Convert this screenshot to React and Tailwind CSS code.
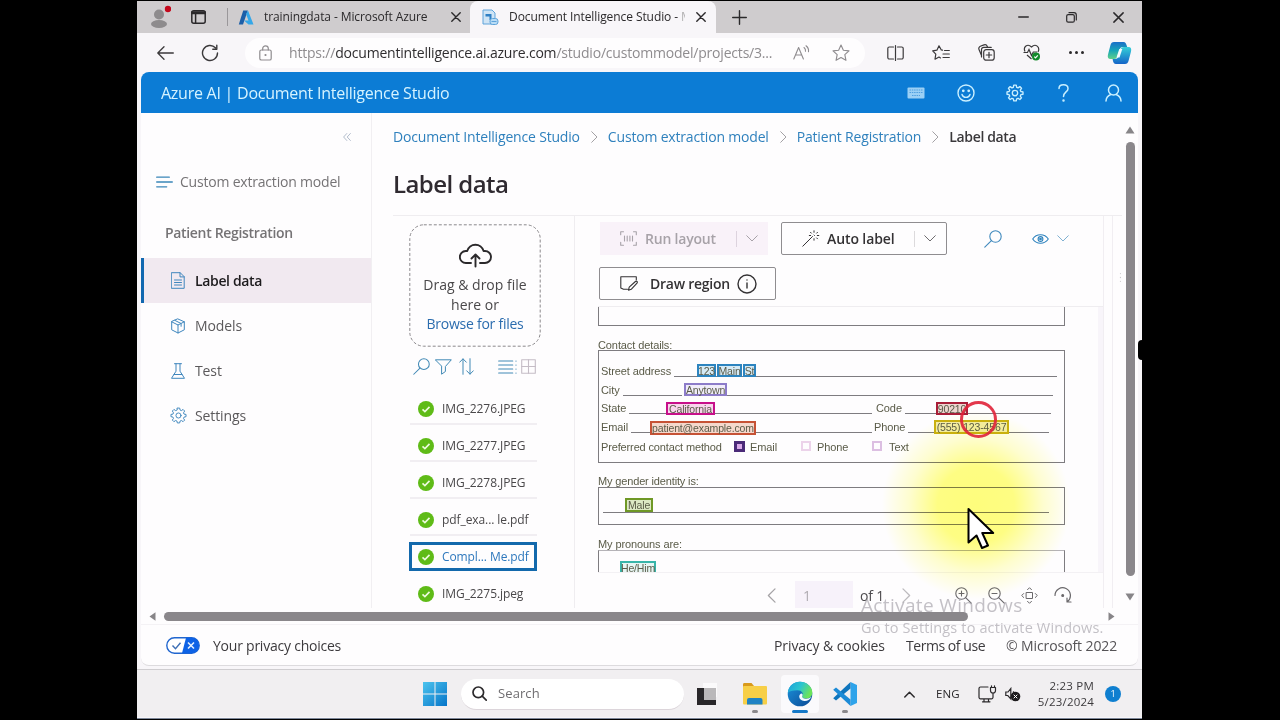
import { clsx } from "clsx";

const Icon = ({ size = 16, w, h, box = "0 0 16 16", stroke = 1, className, children }) => (
    <svg
        width={w || size}
        height={h || size}
        viewBox={box}
        fill="none"
        stroke="currentColor"
        strokeWidth={stroke}
        strokeLinecap="round"
        strokeLinejoin="round"
        className={clsx("shrink-0", className)}
    >
        {children}
    </svg>
);

const GEAR = "M6.9 1h2.2l.4 1.9 1.2.5 1.6-1.1 1.5 1.5-1.1 1.7.5 1.2 1.9.3v2.1l-1.9.4-.5 1.2 1.1 1.6-1.5 1.5-1.6-1.1-1.2.5-.4 1.8H6.9l-.4-1.8-1.2-.5-1.6 1.1-1.5-1.5 1.1-1.6-.5-1.2L.9 9.1V7l1.9-.3.5-1.2-1.1-1.7 1.5-1.5 1.6 1.1 1.2-.5z";

const Gear = ({ size, stroke, className }) => (
    <Icon size={size} stroke={stroke} className={className}>
        <path d={GEAR} />
        <circle cx="8" cy="8" r="2.4" />
    </Icon>
);

const Chevron = ({ className, w = 12, h = 7 }) => (
    <Icon w={w} h={h} box="0 0 12 7" className={className}>
        <path d="M.7.7 6 6 11.3.7" />
    </Icon>
);

const ChevronRight = ({ className, w = 7, h = 12 }) => (
    <Icon w={w} h={h} box="0 0 7 12" className={className}>
        <path d="M.7.7 6 6 .7 11.3" />
    </Icon>
);

const Close = ({ size = 10, stroke = 1.4, className }) => (
    <Icon size={size} box="0 0 10 10" stroke={stroke} className={className}>
        <path d="M.8.8l8.4 8.4M9.2.8.8 9.2" />
    </Icon>
);

const Search = ({ size = 18, className }) => (
    <Icon size={size} box="0 0 18 18" stroke={1.1} className={className}>
        <circle cx="11.5" cy="6.5" r="5.7" />
        <path d="M7.4 10.6.8 17.2" />
    </Icon>
);

const TabBar = () => (
    <div className="flex h-8 shrink-0 items-stretch bg-[#cfccce] text-[#2b292b]">
        <div className="flex w-[90px] items-center pl-[14px]">
            <svg width="20" height="24" viewBox="0 0 20 24" className="shrink-0">
                <circle cx="8" cy="9.500" r="5" fill="#8e8b8d" />
                <ellipse cx="8" cy="19" rx="8" ry="4" fill="#8e8b8d" />
                <circle cx="17" cy="4" r="3.200" fill="#c4081c" />
            </svg>
            <Icon w={15} h={14} box="0 0 15 14" stroke={1.5} className="ml-[20px]">
                <rect x=".8" y=".8" width="13.400" height="12.400" rx="2" />
                <path d="M1 3.600h13M4.600 4v9" />
                <path d="M1 2.200h13" stroke="#2b292b" strokeWidth="2" />
            </Icon>
        </div>
        <div className="my-[7px] w-px bg-[#9a979a]" />
        <div className="flex w-[242px] items-center pl-[10px]">
            <svg width="16" height="15" viewBox="0 0 16 15" className="shrink-0">
                <path d="M5.200.5h4.600L5 14.500H.8z" fill="#1c5fa8" />
                <path d="M10 .5 15.500 14.500h-5L6 10.500h4.500L8 4z" fill="#35a7e8" />
            </svg>
            <span className="ml-[10px] w-[170px] text-[12px] tracking-[-0.1px] whitespace-nowrap">trainingdata - Microsoft Azure</span>
            <Close className="ml-auto mr-[9px]" />
        </div>
        <div className="flex w-[246px] items-center rounded-t-lg bg-[#f8f6f9] pl-[12px]">
            <svg width="17" height="17" viewBox="0 0 17 17" className="shrink-0">
                <path d="M1 1h9l3 3v11H1z" fill="#cfe4f5" stroke="#5ea3da" />
                <path d="M3.500 5h6v6h-2V7.500h-4z" fill="#2f7fc4" />
                <rect x="8" y="9.500" width="8" height="6" rx="2.500" fill="#b9dcf5" stroke="#5ea3da" />
                <path d="M9.500 12.500h5" stroke="#5ea3da" />
            </svg>
            <span className="ml-[10px] w-[176px] overflow-hidden text-[12px] tracking-[-0.08px] whitespace-nowrap">
                Document Intelligence Studio - <span className="text-[#b3b1b3]">M</span>
            </span>
            <Close className="ml-[11px]" />
        </div>
        <Icon size={15} box="0 0 15 15" stroke={1.4} className="ml-[16px] self-center">
            <path d="M7.500.7v13.600M.7 7.500h13.600" />
        </Icon>
        <div className="ml-auto flex items-center pr-[18px]">
            <Icon w={11} h={2} box="0 0 11 2" stroke={1.3}><path d="M.7 1h9.600" /></Icon>
            <Icon size={11} box="0 0 11 11" stroke={1.2} className="ml-[37px]">
                <rect x=".7" y="2.600" width="7.600" height="7.600" rx="1.500" />
                <path d="M3 .7h5a2.300 2.300 0 0 1 2.300 2.300v5" />
            </Icon>
            <Close size={11} stroke={1.3} className="ml-[36px]" />
        </div>
    </div>
);

const AddressBar = () => (
    <div className="flex h-[39px] shrink-0 items-center bg-[#f8f6f9] pl-[20px] text-[#3b393b]">
        <Icon w={17} h={14} box="0 0 17 14" stroke={1.3}><path d="M16.300 7H1M7 .8.8 7 7 13.200" /></Icon>
        <Icon size={18} box="0 0 18 18" stroke={1.4} className="ml-[27px]">
            <path d="M16.500 9A7.500 7.500 0 1 1 14.400 3.800M15.800 1.200v4h-4" />
        </Icon>
        <div className="ml-[26px] flex h-[30px] w-[620px] items-center rounded-full bg-[#fefdfe] pl-[14px] text-[#8f8c8f]">
            <Icon w={13} h={16} box="0 0 13 16" stroke={1.2}>
                <rect x=".8" y="5" width="11.400" height="10" rx="1.600" />
                <path d="M3.700 5V3.600a2.800 2.800 0 0 1 5.600 0V5" />
                <circle cx="6.500" cy="10" r=".5" fill="currentColor" />
            </Icon>
            <span className="ml-[17px] w-[490px] text-[14px] tracking-[-0.2px] whitespace-nowrap">
                https://<span className="text-[#2f2d2f]">documentintelligence.ai.azure.com</span>/studio/custommodel/projects/3...
            </span>
            <Icon w={17} h={15} box="0 0 17 15" stroke={1.1} className="ml-[14px]">
                <path d="M.8 14 5.600 2.500 10.400 14M2.500 10h6.200M11 2.500a4 4 0 0 1 1.500 3.800M13 .8a6.500 6.500 0 0 1 2.500 6" />
            </Icon>
            <Icon size={18} stroke={1} className="ml-[22px]">
                <path d="M8 .9l2.100 4.600 5 .6-3.700 3.400 1 5L8 12l-4.400 2.500 1-5L.9 6.100l5-.6z" />
            </Icon>
        </div>
        <Icon w={17} h={16} box="0 0 17 16" stroke={1.2} className="ml-[22px]">
            <path d="M6.500 2H2.300A1.500 1.500 0 0 0 .8 3.500v9A1.500 1.500 0 0 0 2.300 14h4.200M10.500 2h4.200a1.500 1.500 0 0 1 1.500 1.500v9a1.500 1.500 0 0 1-1.500 1.500h-4.200M8.500.6v14.800" />
        </Icon>
        <Icon w={18} h={16} box="0 0 18 16" stroke={1.2} className="ml-[28px]">
            <path d="M10.500 5.200 9.300 5 7 .8 4.900 5.200.7 5.900l3.100 3.300-.8 5 4-2.200 1.500.9M12.500 5.500h4.800M11 9h6.300M11 12.500h6.300" />
        </Icon>
        <Icon w={17} h={17} box="0 0 17 17" stroke={1.2} className="ml-[28px]">
            <rect x="5.700" y="5.700" width="10.500" height="10.500" rx="2.500" />
            <path d="M11 8.300v5.400M8.300 11h5.400M3.500 11.500 1 5.600A2.500 2.500 0 0 1 2.300 2.300L6 .9a2.500 2.500 0 0 1 3.200 1.300l.5 1.200M3.500 13V5.600a2.200 2.200 0 0 1 2.200-2.200h7.500" />
        </Icon>
        <svg width="18" height="17" viewBox="0 0 18 17" fill="none" stroke="currentColor" strokeWidth="1.200" className="ml-[28px] shrink-0">
            <path d="M2 7.500C-.2 3 4.500-1 8.500 3c4-4 9 0 6.500 5M.5 8.500h4l1.500-3 2.500 6 1.800-3.500H14M4 11l4.500 4" />
            <circle cx="13" cy="12.500" r="4" fill="#138a2b" stroke="none" />
            <path d="m11.300 12.600 1.200 1.200 2.300-2.400" stroke="white" />
        </svg>
        <div className="ml-[28px] flex gap-[3px]">
            <i className="size-[3px] rounded-full bg-[#2b292b]" />
            <i className="size-[3px] rounded-full bg-[#2b292b]" />
            <i className="size-[3px] rounded-full bg-[#2b292b]" />
        </div>
        <svg width="25" height="24" viewBox="0 0 25 24" className="ml-[23px] shrink-0">
            <defs>
                <linearGradient id="cpA" x1="0" y1="0" x2="0" y2="1">
                    <stop offset="0" stopColor="#1b6fc9" />
                    <stop offset=".5" stopColor="#17a5b8" />
                    <stop offset="1" stopColor="#5fd08a" />
                </linearGradient>
                <linearGradient id="cpB" x1="0" y1="0" x2="0" y2="1">
                    <stop offset="0" stopColor="#35d0d8" />
                    <stop offset="1" stopColor="#1464c8" />
                </linearGradient>
            </defs>
            <path d="M7 1h9.500c2 0 2.500 1.500 3 3l.7 2H16c-2 0-3 1-3.500 3l-2 6c-.6 2-1.500 3-3.500 3H3.500C1 18 .3 16 1 13.500L3.500 4c.6-2 1.500-3 3.500-3z" fill="url(#cpA)" />
            <path d="M18 23H9c-2 0-2.700-1.500-3-3l-.4-2H8c2 0 3-1 3.500-3l2-6c.6-2 1.500-3 3.500-3h4.500c2.500 0 3.200 2 2.500 4.500L21.500 20c-.6 2-1.500 3-3.500 3z" fill="url(#cpB)" />
            <path d="M12.300 8h3l-2.800 8.500H9.500z" fill="#f4fbff" />
        </svg>
    </div>
);

const Header = () => (
    <div className="flex h-[41px] shrink-0 items-center bg-[#0c7cd5] pl-[20px] pr-[16px] text-[#c9efff]">
        <span className="text-[16px] font-medium tracking-[-0.25px] whitespace-nowrap text-[#d5f3ff]">Azure AI | Document Intelligence Studio</span>
        <svg width="18" height="12" viewBox="0 0 18 12" className="ml-auto shrink-0">
            <rect x=".5" y=".5" width="17" height="11" rx="1" fill="#9bd0f5" />
            <path d="M2.500 3h13M2.500 5.500h13M5 8.500h8" stroke="#4f9fe0" strokeDasharray="1.500 .8" />
        </svg>
        <Icon size={18} box="0 0 18 18" stroke={1.4} className="ml-[32px]">
            <circle cx="9" cy="9" r="8" />
            <path d="M5 10.500a4.200 4.200 0 0 0 8 0" />
            <circle cx="6.300" cy="6.800" r=".7" fill="currentColor" />
            <circle cx="11.700" cy="6.800" r=".7" fill="currentColor" />
        </Icon>
        <Gear size={18} stroke={1.2} className="ml-[31px]" />
        <Icon w={11} h={18} box="0 0 11 18" stroke={1.5} className="ml-[34px]">
            <path d="M1 4.500C1 2 3 .8 5.500.8S10 2.300 10 4.700C10 8 5.500 8 5.500 12.500" />
            <circle cx="5.500" cy="16.500" r=".5" fill="currentColor" />
        </Icon>
        <Icon w={17} h={18} box="0 0 17 18" stroke={1.5} className="ml-[36px]">
            <circle cx="8.500" cy="6" r="5" />
            <path d="M1 17a7.500 7.500 0 0 1 4.800-6.500M16 17a7.500 7.500 0 0 0-4.800-6.500" />
        </Icon>
    </div>
);

const navItems = [
    {
        label: "Label data",
        active: true,
        icon: (
            <Icon w={14} h={17} box="0 0 14 17" className="mx-[1px]">
                <path d="M.7.7h8.500l4 4v11.600H.7zM9 .7v4.200h4.200M3.500 8h7M3.500 10.500h7M3.500 13h7" />
            </Icon>
        ),
    },
    {
        label: "Models",
        icon: (
            <Icon w={14} h={16} box="0 0 14 16" className="mx-[1px]">
                <path d="M7 1l6.300 2.800v8L7 15 .7 11.800v-8zM.7 3.800 7 7l6.300-3.200M7 7v8M3.900 2.400l6.200 3.100v2.800" />
            </Icon>
        ),
    },
    {
        label: "Test",
        icon: (
            <Icon>
                <path d="M4.500.7h7M6 .7v7.500L1.500 15.300h13L10 8.200V.7M4 11.500h8" />
            </Icon>
        ),
    },
    { label: "Settings", icon: <Gear size={17} stroke={0.9} /> },
];

const Sidebar = () => (
    <div className="flex w-[231px] shrink-0 flex-col border-r border-[#f1eff2] text-[14px] text-[#5b595b]">
        <div className="flex h-[46px] items-center justify-end pt-px pr-[20px] text-[#a9b4c6]">
            <Icon w={8} h={8} box="0 0 8 8" stroke={0.9}><path d="M3.800.5.600 4l3.200 3.500M7.400.5 4.200 4l3.200 3.500" /></Icon>
        </div>
        <div className="flex h-[45px] items-center pl-[15px] text-[#757375]">
            <Icon w={17} h={12} box="0 0 17 12" stroke={1.3} className="text-[#3a86b8]">
                <path d="M.7 1.200h12.600M.7 6h15.600M.7 10.800h10" />
            </Icon>
            <span className="ml-[7px] tracking-[-0.2px] whitespace-nowrap">Custom extraction model</span>
        </div>
        <div className="flex h-[54px] items-center pt-[2px] pl-[24px] font-semibold tracking-[-0.33px] whitespace-nowrap text-[#757375]">Patient Registration</div>
        {navItems.map((item) => (
            <div
                key={item.label}
                className={clsx(
                    "flex h-[45px] items-center border-l-[3px] pl-[26px]",
                    item.active
                        ? "border-[#1168b0] bg-[#f1e9f0] font-semibold tracking-[-0.35px] text-[#1d1b1d]"
                        : "border-transparent tracking-[-0.1px]"
                )}
            >
                <span className="flex w-[25px] text-[#3f86bd]">{item.icon}</span>
                <span className="whitespace-nowrap">{item.label}</span>
            </div>
        ))}
    </div>
);

const files = ["IMG_2276.JPEG", "IMG_2277.JPEG", "IMG_2278.JPEG", "pdf_exa... le.pdf", "Compl... Me.pdf", "IMG_2275.jpeg"];

const Check = () => (
    <svg width="16" height="16" viewBox="0 0 16 16" className="shrink-0">
        <circle cx="8" cy="8" r="8" fill="#5fbb17" />
        <path d="m4.500 8.300 2.400 2.300 4.600-4.700" fill="none" stroke="#effbe0" strokeWidth="1.600" />
    </svg>
);

const FilePanel = () => (
    <div className="flex w-[182px] shrink-0 flex-col border-r border-[#efedf0] pl-[16px] pt-[8px]">
        <div className="relative flex h-[123px] w-[132px] shrink-0 flex-col items-center pt-[19px] text-[14px] leading-[19.5px] text-[#4a484a]">
            <svg width="132" height="123" className="absolute inset-0" fill="none">
                <rect x=".8" y=".8" width="130.400" height="121.400" rx="14" stroke="#8b898c" strokeDasharray="3 2" />
            </svg>
            <Icon w={33} h={25} box="0 0 33 25" stroke={1.9} className="mb-[7px] text-[#2b292b]">
                <path d="M12 20H7a6 6 0 0 1-.3-12h1.500a8.500 8.500 0 0 1 16.400 0H26a6 6 0 0 1 0 12h-5M16.500 23.500V12M12.500 15.500l4-4 4 4" />
            </Icon>
            <span>Drag &amp; drop file</span>
            <span>here or</span>
            <span className="tracking-[-0.25px] text-[#2b6cae]">Browse for files</span>
        </div>
        <div className="flex h-[39px] shrink-0 items-center pl-[4px] text-[#4189b5]">
            <Search size={17} />
            <Icon w={17} h={16} box="0 0 17 16" className="ml-[5px]"><path d="M.7.8h15.600L10.400 7.500v5l-3.800 2.700V7.500z" /></Icon>
            <Icon w={15} h={17} box="0 0 15 17" className="ml-[7px]">
                <path d="M4 16.300V1M.7 4.200 4 .8l3.300 3.400M11 .7V16M7.700 12.800 11 16.200l3.300-3.400" />
            </Icon>
            <Icon w={19} h={14} box="0 0 19 14" stroke={1.2} className="ml-[24px]">
                <path d="M.7 1h14M.7 5h14M.7 9h14M.7 13h14M18 1v.1M18 5v.1M18 9v.1M18 13v.1" />
            </Icon>
            <Icon w={15} h={15} box="0 0 15 15" stroke={1.1} className="ml-[4px] text-[#c5bdc6]">
                <rect x=".7" y=".7" width="13.600" height="13.600" />
                <path d="M7.500.7v13.600M.7 7.500h13.600" />
            </Icon>
        </div>
        <div className="h-[2px] shrink-0" />
        {files.map((name) =>
            name.startsWith("Compl") ? (
                <div key={name} className="mt-[6px] mb-[2px] flex h-[29px] w-[128px] shrink-0 items-center border-[3px] border-[#1369ac] pl-[6px] text-[12px] tracking-[-0.1px] whitespace-nowrap text-[#2e78bd]">
                    <Check />
                    <span className="ml-[8px]">{name}</span>
                </div>
            ) : (
                <div key={name} className="ml-[1px] flex h-[37px] w-[127px] shrink-0 items-center border-b-2 border-[#f1eef2] pt-[7px] pl-[8px] text-[12px] tracking-[-0.08px] whitespace-nowrap text-[#4a484a]">
                    <Check />
                    <span className="ml-[8px]">{name}</span>
                </div>
            )
        )}
    </div>
);

const Toolbar = () => (
    <div className="flex h-[91px] shrink-0 flex-wrap content-start items-center border-b border-[#efedf0] pt-[6px] pl-[1px] text-[14px] font-semibold">
        <div className="ml-px flex h-[33px] w-[168px] items-center bg-[#f9f2f9] pl-[20px] text-[#a7a2a8]">
            <Icon w={17} h={15} box="0 0 17 15" stroke={1.1}>
                <path d="M3.500.7H.7v3M13.500.7h2.800v3M.7 11.300v3h2.800M16.300 11.300v3h-2.800M4.500 5v5M7.200 5v5M9.900 5v5M12.500 5v5" />
            </Icon>
            <span className="ml-[8px] w-[72px] tracking-[-0.2px] whitespace-nowrap">Run layout</span>
            <i className="ml-[19px] h-4 w-px bg-[#ddd3de]" />
            <Chevron className="ml-[9px]" />
        </div>
        <div className="ml-[13px] flex h-[33px] w-[166px] items-center rounded-[2px] border border-[#8f8d90] pl-[20px] text-[#343234]">
            <Icon w={18} h={17} box="0 0 18 17">
                <path d="M.8 16.200 10.500 6.500M12 .8v1.500M8.500 2.300l.9.9M15.500 2.300l-.9.9M16.800 5.500h-1.500M15.500 8.800l-.9-.9M12 10.200V8.700M12 5l.5.5M7.300 5.500h1.400" />
            </Icon>
            <span className="ml-[7px] w-[68px] tracking-[-0.1px] whitespace-nowrap">Auto label</span>
            <i className="ml-[19px] h-4 w-px bg-[#dcdadc]" />
            <Chevron className="ml-[9px] text-[#6d6b6e]" />
        </div>
        <Search className="ml-[37px] text-[#3f89bd]" />
        <Icon w={17} h={10} box="0 0 17 10" stroke={1.1} className="ml-[30px] text-[#2d82bd]">
            <path d="M.7 5C4.500-.6 12.500-.6 16.300 5 12.500 10.600 4.500 10.600.7 5z" />
            <circle cx="8.500" cy="5" r="2.400" />
            <circle cx="8.500" cy="5" r=".8" fill="currentColor" />
        </Icon>
        <Chevron className="ml-[8px] text-[#7fb1d2]" />
        <div className="mt-[12px] mr-auto flex h-[33px] w-[177px] items-center rounded-[2px] border border-[#8f8d90] pl-[20px] text-[#343234]">
            <Icon w={18} h={15} box="0 0 18 15" stroke={1.1}>
                <path d="M7.500 13.300H3.500L.8 12V.8h15.500v3M8.500 14.200l.7-3 6.200-5.700a1.100 1.100 0 0 1 1.600 1.600l-5.800 6.200z" />
            </Icon>
            <span className="ml-[12px] w-[80px] tracking-[-0.25px] whitespace-nowrap">Draw region</span>
            <Icon size={20} box="0 0 20 20" stroke={1.4} className="ml-[7px]">
                <circle cx="10" cy="10" r="9" />
                <path d="M10 9v5M10 6v.1" />
            </Icon>
        </div>
    </div>
);

const Line = ({ className }) => <i className={clsx("h-px bg-[#7e7c80]", className)} />;

// recognised words, placed on the page by their bounding boxes
const Word = ({ className, children }) => (
    <span className={clsx("absolute flex items-center justify-center border-2 text-[10.5px] tracking-[-0.15px] whitespace-nowrap", className)}>{children}</span>
);

const FormPage = () => (
    <div className="relative h-[265px] overflow-hidden font-['Liberation_Sans',Arial,sans-serif] text-[11px] leading-[14px] tracking-[-0.1px] text-[#5a5b48]">
        <div className="w-[467px]">
            <div className="h-[19px] border-x border-b border-[#7e7c80]" />
            <div className="mt-[12px] h-[12px]">Contact details:</div>
            <div className="h-[113px] border border-[#7e7c80] pl-[2px] pt-[13px]">
                <div className="flex h-[18.500px] items-start">
                    <span className="w-[73px] whitespace-nowrap">Street address</span>
                    <Line className="mt-[12px] w-[383px]" />
                </div>
                <div className="flex h-[18.500px] items-start">
                    <span className="w-[22px]">City</span>
                    <Line className="mt-[12px] w-[59px]" />
                    <Line className="ml-[44px] mt-[12px] w-[327px]" />
                </div>
                <div className="flex h-[19px] items-start">
                    <span className="w-[28px]">State</span>
                    <Line className="mt-[12px] w-[243px]" />
                    <span className="ml-[4px] w-[29px]">Code</span>
                    <Line className="mt-[12px] w-[146px]" />
                </div>
                <div className="flex h-[20px] items-start">
                    <span className="w-[30px]">Email</span>
                    <Line className="mt-[12px] w-[241px]" />
                    <span className="ml-[2px] w-[34px]">Phone</span>
                    <Line className="mt-[12px] w-[141px]" />
                </div>
                <div className="flex h-[19px] items-start">
                    <span className="w-[133px] tracking-[-0.14px] whitespace-nowrap">Preferred contact method</span>
                    <i className="mt-px size-[11px] border-[3px] border-[#4b2a78] bg-[#d9a8e8]" />
                    <span className="ml-[5px] w-[51px]">Email</span>
                    <i className="mt-px size-[10px] border-2 border-[#ecd3ea]" />
                    <span className="ml-[6px] w-[55px]">Phone</span>
                    <i className="mt-px size-[10px] border-2 border-[#dcbfe2]" />
                    <span className="ml-[7px]">Text</span>
                </div>
            </div>
            <div className="mt-[11px] h-[13px] tracking-[-0.15px] whitespace-nowrap">My gender identity is:</div>
            <div className="h-[38px] border border-[#7e7c80] pt-[24px] pl-[4px]">
                <Line className="block w-[446px]" />
            </div>
            <div className="mt-[12px] h-[13px] whitespace-nowrap">My pronouns are:</div>
            <div className="h-[38px] border border-[#b5b3b7] border-x-[#7e7c80]" />
        </div>
        <Word className="left-[99px] top-[57px] h-[13px] w-[19px] border-[#2d84bf] bg-[#d5eaf5]">123</Word>
        <Word className="left-[119px] top-[57px] h-[13px] w-[25px] border-[#2d84bf] bg-[#d5eaf5]">Main</Word>
        <Word className="left-[145px] top-[57px] h-[13px] w-[13px] border-[#2d84bf] bg-[#d5eaf5]">St</Word>
        <Word className="left-[86px] top-[76px] h-[13px] w-[43px] border-[#8d7cc9] bg-[#f1edfa]">Anytown</Word>
        <Word className="left-[68px] top-[95px] h-[13px] w-[49px] border-[#c7108a] bg-[#f8d5ec]">California</Word>
        <Word className="left-[52px] top-[114px] h-[14px] w-[106px] border-[#c65235] bg-[#f5d8cc]">patient@example.com</Word>
        <Word className="left-[338px] top-[95px] h-[13px] w-[32px] border-[#a81e38] bg-[#ecd5cf]">90210</Word>
        <Word className="left-[336px] top-[113px] h-[14px] w-[75px] border-[#c9b00f] bg-[#f3ecaa]">(555) 123-4567</Word>
        <Word className="left-[27px] top-[191px] h-[14px] w-[28px] border-[#6f9826] bg-[#dce8c4]">Male</Word>
        <Word className="left-[22px] top-[254px] h-[14px] w-[36px] border-[#38b5a9] bg-[#e6f6f3]">He/Him</Word>
    </div>
);

const Pager = () => (
    <div className="flex h-[36px] shrink-0 items-center border-t border-[#f3f1f4] pt-[9px] pl-[169px] text-[14px] text-[#6a686b]">
        <ChevronRight className="rotate-180 text-[#a5a3a6]" w={9} h={15} />
        <div className="ml-[19px] flex h-[28px] w-[58px] items-center bg-[#f7f2fa] pl-[8px] text-[#b0acb1]">1</div>
        <span className="ml-[7px] w-[24px] tracking-[-0.2px] whitespace-nowrap text-[#4d4b4e]">of 1</span>
        <ChevronRight className="ml-[18px] text-[#bcbabd]" w={9} h={15} />
        <Icon size={17} box="0 0 17 17" stroke={1.1} className="ml-[44px]">
            <circle cx="6.500" cy="6.500" r="5.700" />
            <path d="M10.600 10.600 16.200 16.200M6.500 4v5M4 6.500h5" />
        </Icon>
        <Icon size={17} box="0 0 17 17" stroke={1.1} className="ml-[16px]">
            <circle cx="6.500" cy="6.500" r="5.700" />
            <path d="M10.600 10.600 16.200 16.200M4 6.500h5" />
        </Icon>
        <Icon size={17} box="0 0 17 17" className="ml-[16px]">
            <rect x="5.500" y="5.500" width="6" height="6" />
            <path d="m6.500 2.700 2-2 2 2M6.500 14.300l2 2 2-2M2.700 6.500l-2 2 2 2M14.300 6.500l2 2-2 2" />
        </Icon>
        <Icon w={18} h={17} box="0 0 18 17" stroke={1.2} className="ml-[16px]">
            <path d="M1 8.500a7.700 7.700 0 1 1 12.500 6M13 11v4h4" />
            <circle cx="8.700" cy="8.500" r=".9" fill="currentColor" />
        </Icon>
    </div>
);

const crumbs = ["Document Intelligence Studio", "Custom extraction model", "Patient Registration"];

const Main = () => (
    <div className="flex min-w-0 flex-1 flex-col pl-[21px]">
        <div className="flex h-[48px] shrink-0 items-center pb-px text-[14px] tracking-[-0.18px] whitespace-nowrap text-[#2f81bd]">
            {crumbs.map((c) => (
                <div key={c} className="flex items-center">
                    {c}
                    <ChevronRight className="mr-[10px] ml-[11px] text-[#a3a1a4]" />
                </div>
            ))}
            <span className="font-semibold tracking-[-0.35px] text-[#3a383b]">Label data</span>
        </div>
        <div className="flex h-[54px] shrink-0 items-start pt-[6px] text-[24px] leading-[34px] font-semibold tracking-[-0.55px] whitespace-nowrap text-[#2f2a30]">Label data</div>
        <div className="flex min-h-0 flex-1 overflow-hidden border-t border-[#efedf0]">
            <FilePanel />
            <div className="flex w-[529px] shrink-0 flex-col border-r border-[#f1eef2] pl-[23px]">
                <Toolbar />
                <div className="flex">
                    <div className="w-[500px]"><FormPage /></div>
                    <div className="w-[5px] bg-[#f8f5fa]" />
                </div>
                <Pager />
            </div>
            <div className="w-[9px] border-r border-[#f1eef2]" />
            <div className="flex flex-1 flex-col items-center pt-[57px] pl-[6px] text-[9px] leading-[4px] text-[#c9c7ca]">
                <span>:</span>
                <span>:</span>
            </div>
        </div>
    </div>
);

const VScroll = () => (
    <div className="flex w-[16px] shrink-0 flex-col items-center pt-[13px]">
        <svg width="10" height="8" viewBox="0 0 10 8"><path d="M5 .5 9.500 7.500h-9z" fill="#878588" /></svg>
        <div className="mt-[8px] h-[434px] w-[9px] rounded-full bg-[#8a878b]" />
        <svg width="10" height="8" viewBox="0 0 10 8" className="mt-[17px]"><path d="M5 7.500 9.500.5h-9z" fill="#878588" /></svg>
    </div>
);

const HScroll = () => (
    <div className="flex h-[16px] shrink-0 items-center pl-[8px]">
        <svg width="7" height="9" viewBox="0 0 7 9"><path d="M.5 4.500 6.500.3v8.400z" fill="#878588" /></svg>
        <div className="ml-[8px] h-[9px] w-[804px] rounded-full bg-[#8a878b]" />
        <svg width="7" height="9" viewBox="0 0 7 9" className="ml-[140px]"><path d="M6.500 4.500.5.3v8.400z" fill="#878588" /></svg>
    </div>
);

const Footer = () => (
    <div className="flex h-[42px] shrink-0 items-center border-t border-[#f4f2f5] pl-[25px] pr-[20px] text-[14px] tracking-[-0.23px] whitespace-nowrap text-[#3c3a3d]">
        <svg width="34" height="17" viewBox="0 0 34 17" className="shrink-0">
            <rect x=".8" y=".8" width="32.400" height="15.400" rx="7.700" fill="white" stroke="#2166cf" strokeWidth="1.400" />
            <path d="M20 .8h5.500a7.700 7.700 0 0 1 0 15.400H16z" fill="#0d62e6" />
            <path d="m6.500 8.500 3 3.200 5-6" fill="none" stroke="#3d6fb5" strokeWidth="1.400" />
            <path d="m22 5.500 6 6m0-6-6 6" stroke="#e3f0ff" strokeWidth="1.600" />
        </svg>
        <span className="ml-[13px]">Your privacy choices</span>
        <span className="ml-auto w-[112px] tracking-[-0.1px]">Privacy &amp; cookies</span>
        <span className="ml-[20px] w-[80px] tracking-[-0.45px]">Terms of use</span>
        <span className="ml-[20px] w-[112px] tracking-[-0.1px] text-[#555356]">© Microsoft 2022</span>
    </div>
);

const Taskbar = () => (
    <div className="flex h-[48px] shrink-0 items-center border-t border-[#cfcdd0] bg-[#f1eff1] pt-px pl-[286px] text-[#2b292b]">
        <svg width="24" height="24" viewBox="0 0 24 24" className="shrink-0">
            <defs>
                <linearGradient id="win" x1="0" y1="0" x2="1" y2="1">
                    <stop offset="0" stopColor="#4cc4ee" />
                    <stop offset="1" stopColor="#0675c9" />
                </linearGradient>
            </defs>
            <path d="M0 0h11.500v11.500H0zM12.500 0H24v11.500H12.500zM0 12.500h11.500V24H0zM12.500 12.500H24V24H12.500z" fill="url(#win)" />
        </svg>
        <div className="ml-[14px] flex h-[31px] w-[223px] items-center rounded-full border-b border-[#dcd5da] bg-white pl-[11px] text-[13px] text-[#6f6d70]">
            <Icon size={15} box="0 0 15 15" stroke={1.7} className="text-[#2b292b]">
                <circle cx="6.300" cy="6.300" r="5.300" />
                <path d="m10.200 10.200 4 4" />
            </Icon>
            <span className="ml-[11px] tracking-[0.1px]">Search</span>
        </div>
        <svg width="22" height="24" viewBox="0 0 22 24" className="ml-[12px] shrink-0">
            <rect x="7" y="1" width="14" height="14" fill="#fbfafb" />
            <rect x="1" y="6" width="19" height="17" fill="#29272a" />
            <rect x="8" y="6" width="12" height="12" fill="#bab8ba" />
        </svg>
        <div className="ml-[24px] flex h-[38px] flex-col items-center justify-end">
            <svg width="26" height="24" viewBox="0 0 26 24">
                <path d="M1 2.500C1 1.500 1.500 1 2.500 1h7l2.500 3v4H1z" fill="#d99a1c" />
                <rect x="1" y="4" width="24" height="18.500" rx="1" fill="#f7cf47" />
                <path d="M5 22.500V18a2 2 0 0 1 2-2h11.500a2 2 0 0 1 2 2v4.500z" fill="#1f83c4" />
            </svg>
            <i className="mt-[4px] h-[3px] w-[6px] rounded-full bg-[#8b898c]" />
        </div>
        <div className="ml-[13px] flex h-[38px] w-[38px] flex-col items-center justify-end rounded bg-[#fbfafc]">
            <svg width="26" height="26" viewBox="0 0 26 26">
                <defs>
                    <linearGradient id="edgeTop" x1="0" y1="0" x2="1" y2=".4">
                        <stop offset="0" stopColor="#1c9fdc" />
                        <stop offset=".55" stopColor="#2cc5cf" />
                        <stop offset="1" stopColor="#6be35b" />
                    </linearGradient>
                    <linearGradient id="edgeBot" x1="0" y1="0" x2="1" y2="1">
                        <stop offset="0" stopColor="#1b93dd" />
                        <stop offset="1" stopColor="#0c4a94" />
                    </linearGradient>
                </defs>
                <circle cx="13" cy="13" r="12.300" fill="url(#edgeBot)" />
                <path d="M.8 12C1.500 5 6.500.7 13 .7S25.300 5.500 25.300 11.500c0 4-3 6-6 6-3.500 0-4.800-1.500-3.800-3 1.200-2-.5-5.300-5-5.300C5.500 9.200 2 10 .8 12z" fill="url(#edgeTop)" />
                <path d="M15.500 14.500c-1 1.700.5 3.200 4 3.200 1.800 0 3.500-.6 4.700-1.900-1.200 3.500-4.200 4.500-7 4.300-3-.2-5-2-5-4.500 0-1.300.7-2.300 1.600-2.900 1-.4 2.200.6 1.700 1.800z" fill="#f5fbff" />
            </svg>
            <i className="mt-[3px] h-[3px] w-[16px] rounded-full bg-[#1579c8]" />
        </div>
        <div className="ml-[13px] flex h-[38px] flex-col items-center justify-end">
            <svg width="26" height="26" viewBox="0 0 26 26">
                <path d="M18.500 1 25 4v18l-6.500 3z" fill="#2ea3ea" />
                <path d="M18.500 1v6.500L4 19.500l-2.800-2.300z" fill="#0f75bd" />
                <path d="M18.500 25v-6.500L4 6.500 1.200 8.800z" fill="#1c8ad6" />
            </svg>
            <i className="mt-[3px] h-[3px] w-[6px] rounded-full bg-[#8b898c]" />
        </div>
        <Icon w={11} h={7} box="0 0 11 7" stroke={1.5} className="ml-[46px]"><path d="M.8 6 5.500 1.200 10.200 6" /></Icon>
        <span className="ml-[21px] w-[26px] text-[11.500px] tracking-[0.15px]">ENG</span>
        <Icon w={19} h={18} box="0 0 19 18" stroke={1.2} className="ml-[16px]">
            <path d="M10 2H2.500A1.500 1.500 0 0 0 1 3.500v8.800a1.500 1.500 0 0 0 1.500 1.500h11a1.500 1.500 0 0 0 1.500-1.500V8.500M6 14v2.500M10.500 14v2.500M4.500 16.800H12M12.500 2.500h5v3a2.500 2.500 0 0 1-5 0zM13.500 2.500V.8M16.500 2.500V.8M15 8v4" />
        </Icon>
        <svg width="16" height="15" viewBox="0 0 16 15" className="ml-[8px] shrink-0">
            <path d="M.8 5v3.500h2l3 3.500V1.500L3 5zM8 4.500c.7.500 1 1 1 2" fill="none" stroke="#2b292b" strokeWidth="1.200" />
            <circle cx="10.500" cy="9.500" r="4.800" fill="#1d1b1d" />
            <path d="m8.700 7.700 3.600 3.600m0-3.600-3.600 3.600" stroke="white" />
        </svg>
        <div className="ml-[12px] flex w-[61px] flex-col items-end text-[11.500px] leading-[16.500px] tracking-[0.2px] whitespace-nowrap text-[#3c3a3d]">
            <span>2:23 PM</span>
            <span>5/23/2024</span>
        </div>
        <div className="ml-[11px] flex size-[16px] shrink-0 items-center justify-center rounded-full bg-[#0f7fd0] text-[9px] text-white">1</div>
    </div>
);

const App = () => {
    return (
        <div className="relative h-[720px] w-[1280px] overflow-hidden bg-black pt-px pl-[137px] font-['Open_Sans','Noto_Sans',sans-serif]">
            <div className="flex h-[718px] w-[1005px] flex-col overflow-hidden border-b border-[#7d8799] bg-[#f8f6f9]">
                <TabBar />
                <AddressBar />
                <div className="mr-[4px] ml-[4px] flex h-[594px] shrink-0 flex-col overflow-hidden rounded-lg border-b border-[#dddbde] bg-[#fefdfe]">
                    <Header />
                    <div className="flex h-[495px] shrink-0">
                        <Sidebar />
                        <Main />
                        <VScroll />
                    </div>
                    <HScroll />
                    <Footer />
                </div>
                <div className="h-[3px] shrink-0" />
                <Taskbar />
            </div>

            {/* desktop overlays: activation notice, pointer highlight, click ring, pointer */}
            <div className="absolute top-[592px] left-[861px] whitespace-nowrap text-[#9b98a0]/60">
                <p className="text-[19px] leading-[26px] tracking-[0.35px]">Activate Windows</p>
                <p className="text-[14.500px] leading-[20px] tracking-[0.14px]">Go to Settings to activate Windows.</p>
            </div>
            <div className="absolute top-[409px] left-[880px] size-[192px] rounded-full bg-[radial-gradient(closest-side,#ffff7c_0%,#ffff84_40%,#ffffd0_70%,#ffffff_98%)] mix-blend-multiply" />
            <div className="absolute top-[401px] left-[960px] size-[37px] rounded-full border-[3px] border-[#e02238]/90" />
            <svg width="28" height="43" viewBox="0 0 28 43" className="absolute top-[507px] left-[967px]">
                <path d="M1.500 2v33.500l8-7 5.500 12.500 6-2.500-5.700-12.500h10.900z" fill="white" stroke="black" strokeWidth="2" strokeLinejoin="round" />
            </svg>
            <div className="absolute top-[340px] left-[1138px] h-[20px] w-[5px] rounded-l bg-black" />
        </div>
    );
};

export default App;
